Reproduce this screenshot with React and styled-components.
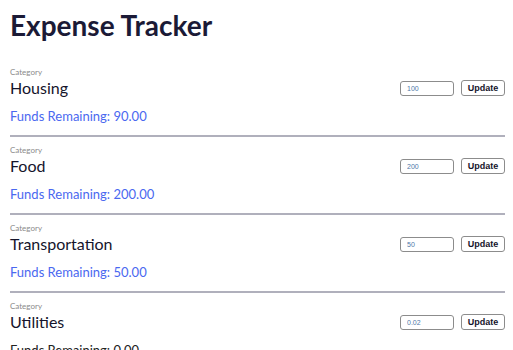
import styled, { createGlobalStyle } from 'styled-components'

const GlobalStyle = createGlobalStyle`
  body {
    margin: 0;
    background: #fff;
    font-family: Lato, "Open Sans", sans-serif;
  }
`

const categories = [
  { name: 'Housing', value: '100', remaining: '90.00' },
  { name: 'Food', value: '200', remaining: '200.00' },
  { name: 'Transportation', value: '50', remaining: '50.00' },
  { name: 'Utilities', value: '0.02', remaining: '0.00' },
]

const Page = styled.div`
  padding: 0 8px 0 10px;
  height: 350px;
  overflow: hidden;
`

const Title = styled.h1`
  margin: 7px 0 16px;
  font-size: 28px;
  line-height: 36px;
  font-weight: 700;
  color: #1b1a36;
`

const Row = styled.div`
  padding: 7px 0 10px;
  border-bottom: 2px solid #b0b0bc;
`

const Label = styled.div`
  font-size: 8px;
  line-height: 12px;
  color: #8a8a8a;
`

const Header = styled.div`
  display: flex;
  align-items: center;
  justify-content: space-between;
  height: 20px;
`

const Name = styled.div`
  font-size: 16px;
  line-height: 20px;
  color: #15142b;
`

const Controls = styled.div`
  display: flex;
  align-items: center;
  gap: 7px;
`

const Amount = styled.input`
  box-sizing: border-box;
  width: 54px;
  height: 15px;
  padding: 0 6px;
  border: 1px solid #8c8c8c;
  border-radius: 3px;
  font-family: "Liberation Sans", Arial, sans-serif;
  font-size: 7px;
  color: #4f78a8;
  outline: none;
`

const UpdateButton = styled.button`
  box-sizing: border-box;
  width: 44px;
  height: 16px;
  padding: 0;
  border: 1px solid #8c8c8c;
  border-radius: 3px;
  background: #fff;
  font-family: "Liberation Sans", Arial, sans-serif;
  font-size: 9px;
  font-weight: 700;
  color: #15142b;
`

const Funds = styled.div`
  margin-top: 9px;
  font-size: 13px;
  line-height: 18px;
  color: ${p => (p.$empty ? '#222' : '#4a68f0')};
`

export default function App() {
  return (
    <Page>
      <GlobalStyle />
      <Title>Expense Tracker</Title>
      {categories.map(c => (
        <Row key={c.name}>
          <Label>Category</Label>
          <Header>
            <Name>{c.name}</Name>
            <Controls>
              <Amount defaultValue={c.value} />
              <UpdateButton>Update</UpdateButton>
            </Controls>
          </Header>
          <Funds $empty={c.remaining === '0.00'}>Funds Remaining: {c.remaining}</Funds>
        </Row>
      ))}
    </Page>
  )
}
